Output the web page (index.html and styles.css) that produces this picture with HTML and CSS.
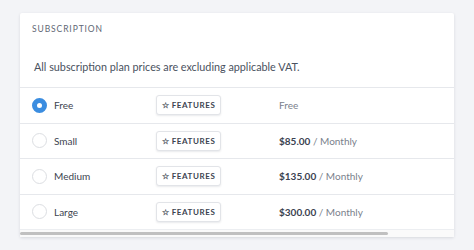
FILE: index.html
```html
<!DOCTYPE html>
<html lang="en">
<head>
  <meta charset="UTF-8" />
  <title>Subscription</title>
  <link rel="stylesheet" href="styles.css">
</head>
<body>
  <div class="card">
    <div class="card-header">SUBSCRIPTION</div>
    <p class="note">All subscription plan prices are excluding applicable VAT.</p>

    <div class="plans">
      <div class="plan-table">
        <div class="plan-row">
          <div class="plan-name"><span class="radio checked"></span>Free</div>
          <div class="plan-features"><button class="features-btn">&#9734; FEATURES</button></div>
          <div class="plan-price muted">Free</div>
        </div>
        <div class="plan-row">
          <div class="plan-name"><span class="radio"></span>Small</div>
          <div class="plan-features"><button class="features-btn">&#9734; FEATURES</button></div>
          <div class="plan-price"><b>$85.00</b> <span class="muted">/ Monthly</span></div>
        </div>
        <div class="plan-row">
          <div class="plan-name"><span class="radio"></span>Medium</div>
          <div class="plan-features"><button class="features-btn">&#9734; FEATURES</button></div>
          <div class="plan-price"><b>$135.00</b> <span class="muted">/ Monthly</span></div>
        </div>
        <div class="plan-row">
          <div class="plan-name"><span class="radio"></span>Large</div>
          <div class="plan-features"><button class="features-btn">&#9734; FEATURES</button></div>
          <div class="plan-price"><b>$300.00</b> <span class="muted">/ Monthly</span></div>
        </div>
      </div>
    </div>
    <!-- horizontal scrollbar of the plans table -->
    <div class="scrollbar"><div class="scrollbar-thumb"></div></div>
  </div>
</body>
</html>
```

FILE: styles.css
```css
html, body {
  margin: 0;
  padding: 0;
  height: 100%;
  overflow: hidden;
  background-color: #f3f4f7;
  font-family: 'Lato', 'Liberation Sans', sans-serif;
  color: #3c4450;
}

body {
  padding: 13px 20px 0 20px;
  box-sizing: border-box;
}

.card {
  width: 434px;
  background: #fff;
  border-radius: 2px;
  box-shadow: 0 1px 3px rgba(40, 50, 70, 0.14);
}

.card-header {
  padding: 11px 12px 0 12px;
  height: 21px;
  font-size: 8.5px;
  letter-spacing: 0.9px;
  color: #5e6774;
}

.note {
  margin: 0;
  padding: 15px 13px 13px 14px;
  font-size: 10.8px;
  line-height: 14px;
  color: #4a5260;
  border-bottom: 1px solid #e6e8ec;
}

.plans {
  overflow: hidden;
}

.plan-table {
  width: 512px;
}

.plan-row {
  display: flex;
  align-items: center;
  height: 34.5px;
  padding-left: 12px;
  border-bottom: 1px solid #e6e8ec;
  font-size: 10px;
}

.plan-row:last-child {
  border-bottom: none;
}

.plan-name {
  width: 124px;
  display: flex;
  align-items: center;
  gap: 7px;
  color: #3c4450;
}

.radio {
  width: 15px;
  height: 15px;
  border-radius: 50%;
  border: 1px solid #dcdee2;
  box-sizing: border-box;
  background: #fff;
}

.radio.checked {
  border: 5px solid #3b8de0;
}

.plan-features {
  width: 123px;
}

.features-btn {
  height: 20px;
  width: 65px;
  padding: 0;
  background: #fff;
  border: 1px solid #e2e4e8;
  border-radius: 3px;
  box-shadow: 0 1px 2px rgba(40, 50, 70, 0.1);
  font-family: 'Lato', 'Liberation Sans', sans-serif;
  font-size: 8px;
  font-weight: 700;
  letter-spacing: 0.6px;
  color: #3c4450;
}

.plan-price b {
  font-weight: 700;
  color: #3a4250;
}

.muted {
  color: #7a818c;
}

.scrollbar {
  height: 8px;
  padding: 2px 0;
  box-sizing: border-box;
  background: #fafafa;
  border-top: 1px solid #eceef1;
}

.scrollbar-thumb {
  width: 368px;
  height: 100%;
  background: #c0c0c0;
  border-radius: 3px;
}
```
